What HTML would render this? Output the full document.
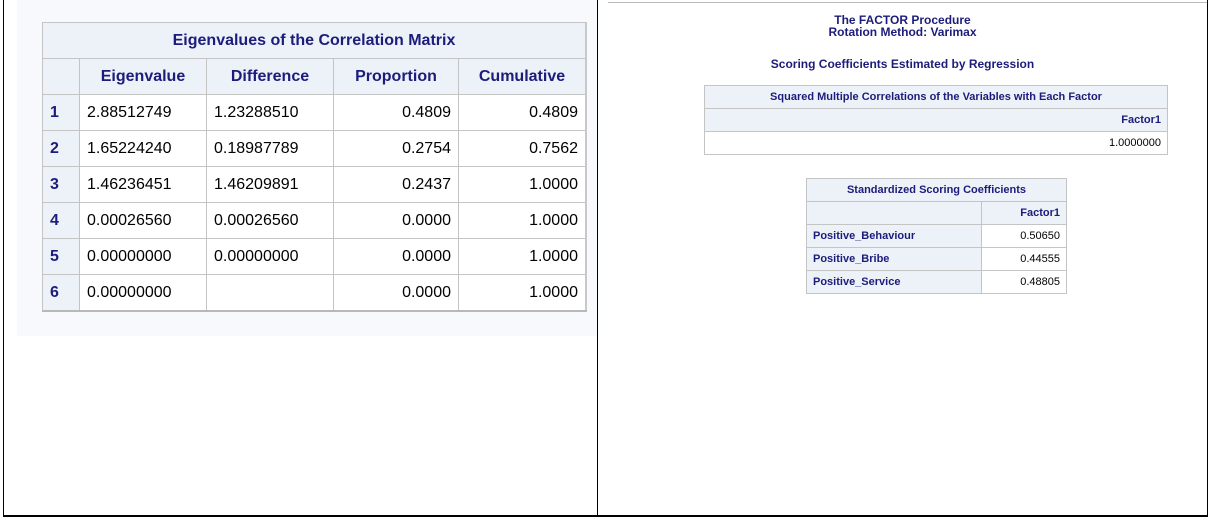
<!DOCTYPE html>
<html><head><style>
body{margin:0;width:1215px;height:519px;background:#fff;position:relative;overflow:hidden;font-family:"Liberation Sans",Arial,sans-serif}
.a{position:absolute}
table{border-collapse:collapse;position:absolute}
td{border:1px solid #c4c4c4;padding:0 7px;white-space:nowrap}
.h{background:#edf2f9;color:#1c1c7a;font-weight:bold}
.r{text-align:right}
#t1 td{height:35px;font-size:16px}
#t1{border-bottom:2px solid #b8b8b8;border-right:2px solid #c8c8c8}
#t2 td,#t3 td{height:22px;font-size:11px;padding:0 6px}
</style></head><body>
<div class="a" style="left:3px;top:0;width:1px;height:517px;background:#000"></div>
<div class="a" style="left:1207px;top:0;width:1px;height:517px;background:#000"></div>
<div class="a" style="left:3px;top:515px;width:1205px;height:2px;background:#000"></div>
<div class="a" style="left:597px;top:0;width:1px;height:517px;background:#000"></div>
<div class="a" style="left:17px;top:0;width:580px;height:336px;background:#f8f9fd"></div>
<div class="a" style="left:608px;top:2px;width:599px;height:1px;background:#bbb"></div>

<table id="t1" style="left:42px;top:22px;width:545px;background:#fff">
<tr><td colspan="5" class="h" style="text-align:center">Eigenvalues of the Correlation Matrix</td></tr>
<tr><td class="h" style="width:22px"></td><td class="h" style="text-align:center;width:112px">Eigenvalue</td><td class="h" style="text-align:center;width:112px">Difference</td><td class="h" style="text-align:center;width:110px">Proportion</td><td class="h" style="text-align:center">Cumulative</td></tr>
<tr><td class="h">1</td><td>2.88512749</td><td>1.23288510</td><td class="r">0.4809</td><td class="r">0.4809</td></tr>
<tr><td class="h">2</td><td>1.65224240</td><td>0.18987789</td><td class="r">0.2754</td><td class="r">0.7562</td></tr>
<tr><td class="h">3</td><td>1.46236451</td><td>1.46209891</td><td class="r">0.2437</td><td class="r">1.0000</td></tr>
<tr><td class="h">4</td><td>0.00026560</td><td>0.00026560</td><td class="r">0.0000</td><td class="r">1.0000</td></tr>
<tr><td class="h">5</td><td>0.00000000</td><td>0.00000000</td><td class="r">0.0000</td><td class="r">1.0000</td></tr>
<tr><td class="h">6</td><td>0.00000000</td><td></td><td class="r">0.0000</td><td class="r">1.0000</td></tr>
</table>

<div class="a" style="left:598px;width:609px;top:14px;text-align:center;font-size:12px;font-weight:bold;color:#1c1c7a;line-height:12px">The FACTOR Procedure<br>Rotation Method: Varimax</div>
<div class="a" style="left:598px;width:609px;top:57px;text-align:center;font-size:12px;font-weight:bold;color:#1c1c7a">Scoring Coefficients Estimated by Regression</div>

<table id="t2" style="left:704px;top:85px;width:464px;background:#fff">
<tr><td class="h" style="text-align:center">Squared Multiple Correlations of the Variables with Each Factor</td></tr>
<tr><td class="h r">Factor1</td></tr>
<tr><td class="r">1.0000000</td></tr>
</table>

<table id="t3" style="left:806px;top:178px;width:261px;background:#fff">
<tr><td colspan="2" class="h" style="text-align:center">Standardized Scoring Coefficients</td></tr>
<tr><td class="h" style="width:162px"></td><td class="h r">Factor1</td></tr>
<tr><td class="h">Positive_Behaviour</td><td class="r">0.50650</td></tr>
<tr><td class="h">Positive_Bribe</td><td class="r">0.44555</td></tr>
<tr><td class="h">Positive_Service</td><td class="r">0.48805</td></tr>
</table>
</body></html>
